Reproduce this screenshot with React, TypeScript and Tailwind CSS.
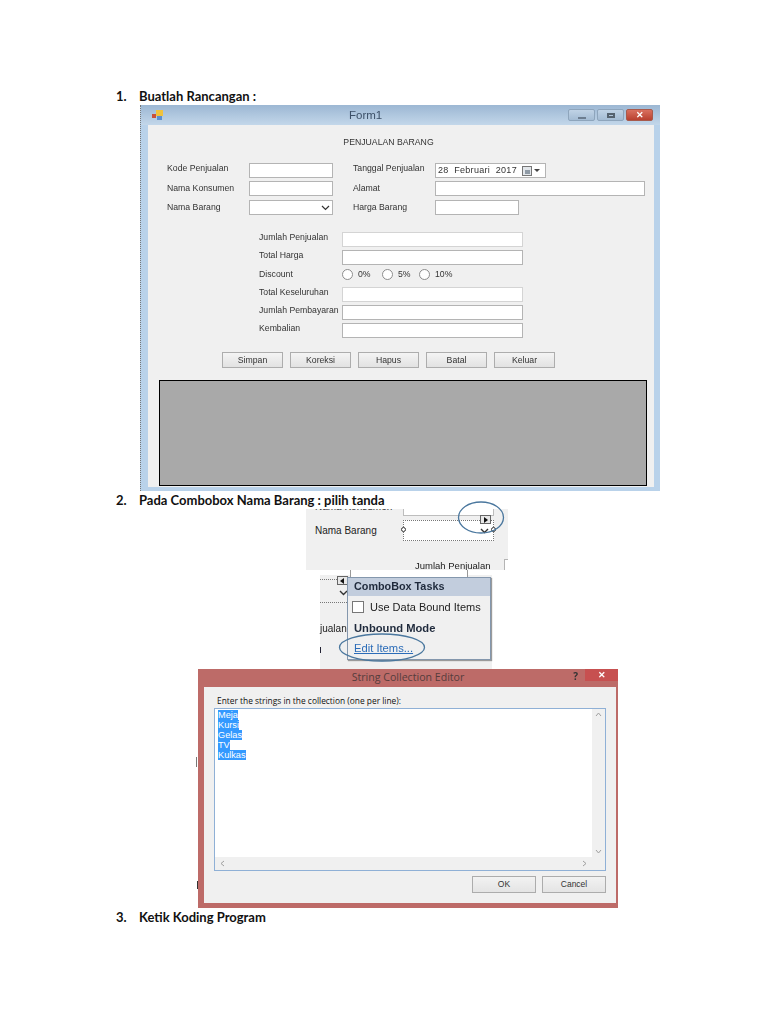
import React from 'react';

const ui = "font-['Liberation_Sans',sans-serif]";
const segoe = "font-['Open_Sans',sans-serif]";

function Heading({ no, children }: { no: string; children: React.ReactNode }) {
  return (
    <div className="flex h-[18px] items-center pl-[116px] font-['Lato',sans-serif] text-[13px] leading-[18px] font-bold text-[#111]">
      <span className="w-[23px]">{no}</span>
      <span>{children}</span>
    </div>
  );
}

function Field({ w, dim }: { w: string; dim?: boolean }) {
  return <div className={`${w} h-[15px] shrink-0 border bg-white ${dim ? 'border-[#d4d4d4]' : 'border-[#b4b4b4]'}`} />;
}

function Label({ w, low, children }: { w: string; low?: boolean; children: React.ReactNode }) {
  return <div className={`${w} shrink-0 ${low ? 'pb-[1px]' : 'pb-[4px]'} text-[8.7px] leading-[11px] whitespace-nowrap text-[#333]`}>{children}</div>;
}

function Radio({ label, w }: { label: string; w: string }) {
  return (
    <div className={`${w} flex items-center`}>
      <span className="h-[11px] w-[11px] shrink-0 rounded-full border border-[#8d8d8d] bg-white" />
      <span className="ml-[5px] text-[8.7px] leading-[11px] text-[#333]">{label}</span>
    </div>
  );
}

function FormButton({ children }: { children: React.ReactNode }) {
  return (
    <div className="flex h-[16px] w-[61px] items-center justify-center border border-[#adadad] bg-gradient-to-b from-[#f4f4f4] to-[#e2e2e2] text-[8.7px] leading-[11px] text-[#333]">
      {children}
    </div>
  );
}

function MiddleRow({ label, dim }: { label: string; dim?: boolean }) {
  return (
    <div className="flex h-[15px] items-center pl-[111px]">
      <Label w="w-[83px]">{label}</Label>
      <Field w="w-[181px]" dim={dim} />
    </div>
  );
}

function AppIcon() {
  return (
    <svg width="12" height="11" viewBox="0 0 12 11" className="shrink-0">
      <rect x="0" y="4" width="4" height="4" fill="#c8503c" />
      <rect x="4" y="0" width="7" height="6" fill="#f0c23c" />
      <rect x="5" y="6" width="5" height="4" fill="#5b8fd0" />
    </svg>
  );
}

function FormWindow() {
  return (
    <div className={`${ui} ml-[140px] flex h-[386px] w-[520px] flex-col border-l border-dotted border-l-[#777] bg-[#b9d2ea] blur-[0.3px]`}>
      <div className="flex h-[20px] shrink-0 items-center bg-gradient-to-b from-[#9cb7d3] to-[#c3d7ea] pr-[7px] pl-[11px]">
        <AppIcon />
        <div className="ml-[185px] text-[11.5px] leading-[14px] text-[#3c5068]">Form1</div>
        <div className="ml-auto flex gap-[2px]">
          <div className="flex h-[12px] w-[27px] items-end justify-center rounded-[2px] border border-[#8ea5bc] bg-gradient-to-b from-[#c0d3e6] to-[#a4bcd4] pb-[1px]">
            <span className="h-[2px] w-[8px] bg-[#6c7d90]" />
          </div>
          <div className="flex h-[12px] w-[27px] items-center justify-center rounded-[2px] border border-[#8ea5bc] bg-gradient-to-b from-[#c0d3e6] to-[#a4bcd4]">
            <span className="h-[5px] w-[8px] border-2 border-[#55626f]" />
          </div>
          <div className="flex h-[12px] w-[27px] items-center justify-center rounded-[2px] border border-[#a85a4c] bg-gradient-to-b from-[#d9705f] to-[#b9402f] text-[9px] leading-none font-bold text-white">
            ✕
          </div>
        </div>
      </div>

      <div className="mr-[6px] mb-[4px] ml-[7px] flex-1 bg-[#f0f0f0] pt-[10px]">
        <div className="pr-[25px] text-center text-[8.7px] leading-[14px] text-[#333]">PENJUALAN BARANG</div>

        <div className="mt-[14px] flex h-[15px] items-center pl-[19px]">
          <Label w="w-[82px]">Kode Penjualan</Label>
          <Field w="w-[84px]" />
          <div className="ml-[20px]">
            <Label w="w-[82px]">Tanggal Penjualan</Label>
          </div>
          <div className="flex h-[15px] w-[111px] items-center border border-[#b4b4b4] bg-white pl-[2px] text-[9px] tracking-[0.3px] whitespace-pre text-[#333]">
            28  Februari  2017
            <svg width="19" height="10" viewBox="0 0 19 10" className="ml-[5px]">
              <rect x="0.5" y="0.5" width="9" height="9" fill="#e2e6ea" stroke="#767676" />
              <rect x="3" y="4" width="5" height="4" fill="#8f9aa5" />
              <path d="M12 3h6l-3 3z" fill="#444" />
            </svg>
          </div>
        </div>
        <div className="mt-[3px] flex h-[15px] items-center pl-[19px]">
          <Label w="w-[82px]" low>Nama Konsumen</Label>
          <Field w="w-[84px]" />
          <div className="ml-[20px]">
            <Label w="w-[82px]" low>Alamat</Label>
          </div>
          <Field w="w-[210px]" />
        </div>
        <div className="mt-[4px] flex h-[15px] items-center pl-[19px]">
          <Label w="w-[82px]" low>Nama Barang</Label>
          <div className="flex h-[15px] w-[84px] items-center justify-end border border-[#b4b4b4] bg-white pr-[2px]">
            <svg width="9" height="6" viewBox="0 0 9 6">
              <path d="M1 1l3.5 3.5L8 1" fill="none" stroke="#333" strokeWidth="1.2" />
            </svg>
          </div>
          <div className="ml-[20px]">
            <Label w="w-[82px]" low>Harga Barang</Label>
          </div>
          <Field w="w-[84px]" />
        </div>

        <div className="mt-[17px]">
          <MiddleRow label="Jumlah Penjualan" dim />
        </div>
        <div className="mt-[3px]">
          <MiddleRow label="Total Harga" />
        </div>
        <div className="mt-[2px] flex h-[15px] items-center pl-[111px]">
          <Label w="w-[83px]" low>Discount</Label>
          <Radio label="0%" w="w-[40px]" />
          <Radio label="5%" w="w-[37px]" />
          <Radio label="10%" w="w-[40px]" />
        </div>
        <div className="mt-[5px]">
          <MiddleRow label="Total Keseluruhan" dim />
        </div>
        <div className="mt-[3px]">
          <MiddleRow label="Jumlah Pembayaran" />
        </div>
        <div className="mt-[3px]">
          <MiddleRow label="Kembalian" />
        </div>

        <div className="mt-[14px] flex gap-[7px] pl-[74px]">
          <FormButton>Simpan</FormButton>
          <FormButton>Koreksi</FormButton>
          <FormButton>Hapus</FormButton>
          <FormButton>Batal</FormButton>
          <FormButton>Keluar</FormButton>
        </div>

        <div className="mt-[12px] ml-[11px] h-[106px] w-[488px] border border-black bg-[#a9a9a9]" />
      </div>
    </div>
  );
}

function SmartTag({ left }: { left?: boolean }) {
  return (
    <div className="flex h-[9px] w-[11px] items-center justify-center border border-[#666] bg-[#e8e8e8]">
      <svg width="5" height="6" viewBox="0 0 5 6">
        <path d={left ? 'M4 0v6L0 3z' : 'M1 0v6l4-3z'} fill="#111" />
      </svg>
    </div>
  );
}

// the little designer crop with the combobox selected
function ComboCrop() {
  return (
    <div className={`${ui} relative ml-[306px] h-[61px] w-[202px] bg-[#f0f0f0] blur-[0.3px]`}>
      <div className="absolute inset-0 overflow-hidden">
        <div className="absolute top-[-8px] left-[9px] text-[10px] leading-[12px] text-[#333]">Nama Konsumen</div>
      </div>
      <div className="absolute top-0 left-[97px] h-[7px] w-[91px] border-x border-b border-[#bdbdbd] bg-white" />
      <div className="absolute top-[11px] left-[97px] h-[21px] w-[91px] border border-dotted border-[#777] bg-white" />
      <div className="absolute top-[6px] left-[174px] bg-[#e8e8e8]">
        <SmartTag />
      </div>
      <div className="absolute top-[18px] left-[95px] h-[5px] w-[5px] rounded-full border border-[#333] bg-white" />
      <div className="absolute top-[18px] left-[185px] h-[5px] w-[5px] rounded-full border border-[#333] bg-white" />
      <svg className="absolute top-[19px] left-[174px]" width="9" height="6" viewBox="0 0 9 6">
        <path d="M1 1l3.5 3.5L8 1" fill="none" stroke="#333" strokeWidth="1.4" />
      </svg>
      <div className="absolute top-[15px] left-[9px] text-[10px] leading-[13px] text-[#222]">Nama Barang</div>
      <div className="absolute top-[50px] left-[109px] text-[9.5px] leading-[13px] text-[#222]">Jumlah Penjualan</div>
      <div className="absolute top-[50px] left-[198px] h-[11px] w-[4px] border-t border-l border-[#b4b4b4] bg-white" />
      <svg className="absolute top-[-8px] left-[151px]" width="48" height="33" viewBox="0 0 48 33">
        <ellipse cx="24" cy="16.5" rx="22.5" ry="15.5" fill="none" stroke="#4a779e" strokeWidth="1.3" />
      </svg>
    </div>
  );
}

function TasksCrop() {
  return (
    <div className={`${segoe} relative mt-[5px] ml-[320px] h-[94px] w-[172px] bg-[#f0f0f0] blur-[0.3px]`}>
      <div className="absolute top-[-5px] left-[30px] h-[7px] w-[118px] border-x border-[#999] bg-white" />
      <div className="absolute top-[4px] left-0 w-[17px] border-t border-dotted border-[#777]" />
      <div className="absolute top-[1px] left-[17px]">
        <SmartTag left />
      </div>
      <svg className="absolute top-[15px] left-[19px]" width="9" height="6" viewBox="0 0 9 6">
        <path d="M1 1l3.5 3.5L8 1" fill="none" stroke="#333" strokeWidth="1.4" />
      </svg>
      <div className="absolute top-[27px] left-0 w-[27px] border-t border-dotted border-[#777]" />
      <div className={`${ui} absolute top-[47px] left-0 text-[10px] leading-[13px] text-[#222]`}>jualan</div>
      <div className="absolute top-[72px] left-0 h-[6px] w-[1px] bg-[#223]" />

      <div className="absolute top-[2px] left-[27px] h-[83px] w-[144px] border border-[#8497ad] bg-[#f0f0f0] shadow-[1px_1px_1px_#9a9a9a]">
        <div className={`${ui} flex h-[18px] items-center bg-[#c2cddd] pb-[3px] pl-[6px] text-[10.8px] leading-[14px] font-bold text-[#1f2a3c]`}>
          ComboBox Tasks
        </div>
        <div className="mt-[4px] flex items-center pl-[4px]">
          <span className="h-[12px] w-[12px] border border-[#777] bg-white" />
          <span className={`${ui} ml-[6px] text-[11px] leading-[14px] whitespace-nowrap text-[#222]`}>Use Data Bound Items</span>
        </div>
        <div className={`${ui} mt-[7px] pl-[6px] text-[11.2px] leading-[14px] font-bold text-[#1f2a3c]`}>Unbound Mode</div>
        <div className={`${ui} mt-[6px] pl-[6px] text-[11.2px] leading-[14px] text-[#2b6cb8] underline`}>Edit Items...</div>
      </div>
      <svg className="absolute top-[58px] left-[18px]" width="88" height="30" viewBox="0 0 88 30">
        <ellipse cx="44" cy="14.5" rx="42.5" ry="13.5" fill="none" stroke="#4a779e" strokeWidth="1.3" />
      </svg>
    </div>
  );
}

function DialogButton({ children }: { children: React.ReactNode }) {
  return (
    <div className={`${ui} flex h-[17px] w-[64px] items-center justify-center border border-[#acacac] bg-gradient-to-b from-[#f2f2f2] to-[#e4e4e4] text-[8.5px] text-[#333]`}>
      {children}
    </div>
  );
}

function Selected({ children }: { children: string }) {
  return <div className="w-fit bg-[#3399ff] text-white">{children}</div>;
}

function StringEditor() {
  return (
    <div className={`${segoe} relative ml-[198px] flex h-[239px] w-[420px] flex-col bg-[#bd6b68] blur-[0.3px]`}>
      <div className="absolute top-[88px] left-[-2px] h-[10px] w-[1px] bg-[#777]" />
      <div className="absolute top-[212px] left-[-1px] h-[8px] w-[1px] bg-[#333]" />
      <div className="relative flex h-[18px] shrink-0 items-center justify-center text-[10.6px] text-[#553c3c]">
        String Collection Editor
        <span className="absolute top-[1px] right-[40px] text-[10px] leading-[12px] font-bold text-[#333]">?</span>
        <span className="absolute top-0 right-0 flex h-[12px] w-[33px] items-center justify-center bg-[#c75050] text-[9px] font-bold text-white">✕</span>
      </div>
      <div className="mr-[2px] mb-[5px] ml-[6px] flex-1 bg-[#f0f0f0] pt-[8px]">
        <div className="pl-[13px] text-[8.4px] leading-[12px] whitespace-nowrap text-[#111]">Enter the strings in the collection (one per line):</div>
        <div className="mt-[1px] ml-[10px] flex h-[163px] w-[392px] flex-col border border-[#8fb0d6] bg-white">
          <div className="flex min-h-0 flex-1">
            <div className={`${ui} flex-1 pt-[1px] pl-[3px] text-[9.2px] leading-[10px]`}>
              <Selected>Meja</Selected>
              <Selected>Kursi</Selected>
              <Selected>Gelas</Selected>
              <Selected>TV</Selected>
              <Selected>Kulkas</Selected>
            </div>
            <div className="flex w-[13px] flex-col items-center justify-between bg-[#f0f0f0] py-[3px]">
              <svg width="7" height="5" viewBox="0 0 7 5"><path d="M1 4l2.5-3L6 4" fill="none" stroke="#a0a0a0" /></svg>
              <svg width="7" height="5" viewBox="0 0 7 5"><path d="M1 1l2.5 3L6 1" fill="none" stroke="#a0a0a0" /></svg>
            </div>
          </div>
          <div className="flex h-[13px] shrink-0 items-center justify-between bg-[#f0f0f0] pr-[18px] pl-[5px]">
            <svg width="5" height="7" viewBox="0 0 5 7"><path d="M4 1L1 3.5 4 6" fill="none" stroke="#a0a0a0" /></svg>
            <svg width="5" height="7" viewBox="0 0 5 7"><path d="M1 1l3 2.5L1 6" fill="none" stroke="#a0a0a0" /></svg>
          </div>
        </div>
        <div className="mt-[5px] flex justify-end gap-[6px] pr-[10px]">
          <DialogButton>OK</DialogButton>
          <DialogButton>Cancel</DialogButton>
        </div>
      </div>
    </div>
  );
}

export default function App() {
  return (
    <main className="h-[1024px] w-[768px] overflow-hidden bg-white pt-[87px]">
      <Heading no="1.">Buatlah Rancangan :</Heading>
      <FormWindow />
      <Heading no="2.">Pada Combobox Nama Barang : pilih tanda</Heading>
      <ComboCrop />
      <TasksCrop />
      <StringEditor />
      <Heading no="3.">Ketik Koding Program</Heading>
    </main>
  );
}
